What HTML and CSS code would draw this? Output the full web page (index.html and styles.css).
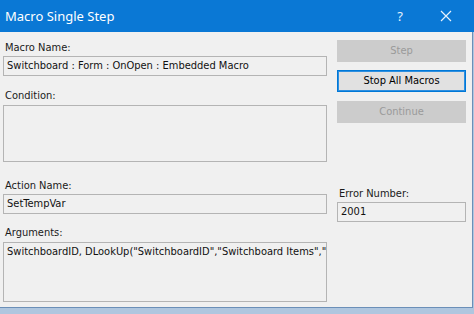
FILE: index.html
```html
<!DOCTYPE html>
<html>
<head>
<meta charset="utf-8">
<link rel="stylesheet" href="styles.css">
</head>
<body>
<div class="screen">
  <div class="titlebar">
    <span class="title">Macro Single Step</span>
    <span class="help">?</span>
    <span class="close">
      <svg width="12" height="12" viewBox="0 0 12 12"><path d="M1 1L11 11M11 1L1 11" stroke="#e8f2fc" stroke-width="1.2" fill="none"/></svg>
    </span>
  </div>
  <div class="window">
    <div class="leftcol">
      <div class="label l-macro">Macro Name:</div>
      <div class="box single">Switchboard : Form : OnOpen : Embedded Macro</div>
      <div class="label l-cond">Condition:</div>
      <div class="box cond"></div>
      <div class="label l-action">Action Name:</div>
      <div class="box single">SetTempVar</div>
      <div class="label l-args">Arguments:</div>
      <div class="box args">SwitchboardID, DLookUp("SwitchboardID","Switchboard Items","[ItemNumber] = 0 AND [Argument] = 'Default'")</div>
    </div>
    <div class="rightcol">
      <div class="btn disabled">Step</div>
      <div class="btn active">Stop All Macros</div>
      <div class="btn disabled b-cont">Continue</div>
      <div class="label l-err">Error Number:</div>
      <div class="box single">2001</div>
    </div>
  </div>
</div>
</body>
</html>
```
FILE: styles.css
```css
html, body {
  margin: 0;
  padding: 0;
}
body {
  width: 474px;
  height: 314px;
  overflow: hidden;
  background: #afc6df;
  font-family: "DejaVu Sans Condensed", "DejaVu Sans", sans-serif;
  font-size: 11px;
  color: #1a1a1a;
}
.screen {
  width: 474px;
  height: 314px;
}
.titlebar {
  height: 32px;
  background: #0a78d5;
  color: #fff;
  display: flex;
  align-items: center;
  font-family: "Noto Sans", "Open Sans", sans-serif;
  font-size: 13px;
}
.title {
  padding-left: 5px;
  flex: 1;
  margin-top: -1px;
}
.help {
  width: 20px;
  text-align: center;
  margin-right: 30px;
  color: #e8f2fc;
}
.close {
  width: 12px;
  margin-right: 22px;
  display: flex;
  align-items: center;
}
.window {
  width: 469px;
  height: 275px;
  background: #f0f0f0;
  border-right: 1px solid #6b8fb8;
  border-bottom: 1px solid #6b8fb8;
  display: flex;
  gap: 10px;
  padding-left: 3px;
}
.leftcol {
  width: 324px;
  padding-top: 9px;
  display: flex;
  flex-direction: column;
}
.rightcol {
  width: 129px;
  padding-top: 8px;
  display: flex;
  flex-direction: column;
}
.label {
  line-height: 13px;
  height: 13px;
  padding-left: 2px;
  white-space: nowrap;
}
.box {
  box-sizing: border-box;
  border: 1px solid #b4b4b4;
  background: #f0f0f0;
  padding: 0 3px;
  line-height: 18px;
  white-space: nowrap;
  overflow: hidden;
  color: #111;
}
.single {
  height: 20px;
}
.l-macro { margin-bottom: 2px; }
.l-cond { margin-top: 13px; margin-bottom: 3px; }
.cond { height: 57px; }
.l-action { margin-top: 17px; margin-bottom: 2px; }
.l-args { margin-top: 12px; margin-bottom: 3px; }
.args { height: 60px; }
.btn {
  box-sizing: border-box;
  height: 22px;
  line-height: 20px;
  text-align: center;
  border: 1px solid transparent;
}
.disabled {
  background: #cccccc;
  color: #9a9a9a;
}
.active {
  margin-top: 8px;
  background: #e1e1e1;
  border: 1px solid #0078d7;
  box-shadow: inset 0 0 0 1px #2e8fe0;
  color: #000;
}
.b-cont { margin-top: 9px; }
.l-err { margin-top: 64px; margin-bottom: 2px; }
```
